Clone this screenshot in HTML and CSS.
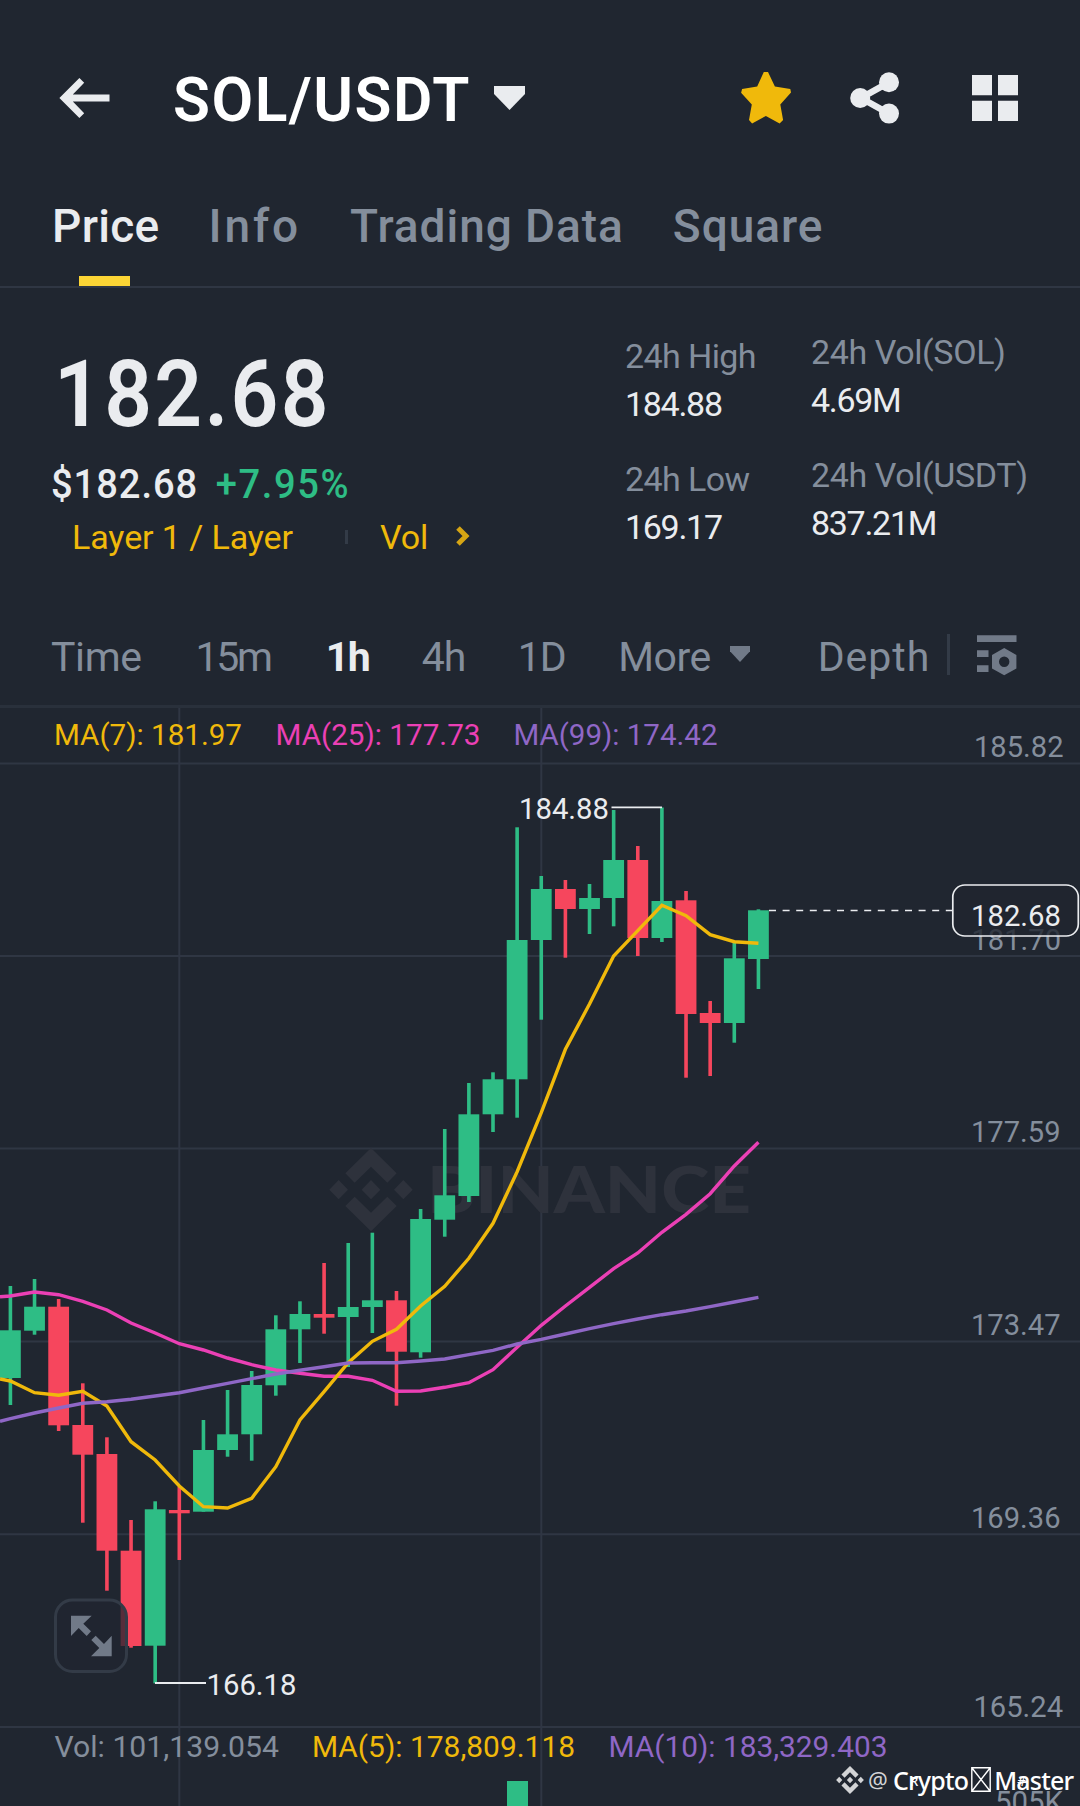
FILE: index.html
```html
<!DOCTYPE html>
<html lang="en">
<head>
    <meta charset="UTF-8">
    <meta name="viewport" content="width=device-width, initial-scale=1.0">
    <title>SOL/USDT</title>
    <link rel="stylesheet" href="styles.css">
</head>
<body>
    <header class="header">
        <svg class="back" width="51" height="40" viewBox="0 0 51 40">
            <path d="M.4 20 20.4 0l4.8 4.8L13.8 16.4h36.7v7.2H13.8l11.4 11.6-4.8 4.8z"/>
        </svg>
        <h1 class="pair">SOL/USDT</h1>
        <svg class="caret" width="31" height="24" viewBox="0 0 31 24">
            <path d="M0 0h31v8L15.5 24 0 8z"/>
        </svg>
        <div class="actions">
            <svg class="star" width="50" height="52" viewBox="0 0 50 52">
                <path d="M22.8 0h4.2l6.9 14.5 15.4 2.6.7 3.4-10.7 12 2.8 15.6-3.5 3.4L24.9 44 11.1 51.4 8 48l2.8-15.6L.1 20.7l1-3.6 15.1-2.6z"/>
            </svg>
            <svg class="share" width="50" height="52" viewBox="0 0 50 52">
                <path d="M39 10.4 11 26l28 15.6" fill="none" stroke="#eaecef" stroke-width="6.5"/>
                <circle cx="39" cy="10.3" r="10"/>
                <circle cx="10.2" cy="26" r="10"/>
                <circle cx="39" cy="41.6" r="10"/>
            </svg>
            <svg class="grid" width="46" height="46" viewBox="0 0 46 46">
                <path d="M0 0h20v20.3H0zM26 0h20v20.3H26zM0 25.7h20V46H0zM26 25.7h20V46H26z"/>
            </svg>
        </div>
    </header>

    <nav class="tabs">
        <span class="tab active">Price</span>
        <span class="tab info">Info</span>
        <span class="tab">Trading Data</span>
        <span class="tab">Square</span>
    </nav>

    <section class="summary">
        <div class="main-price">
            <div class="last">182.68</div>
            <div class="change">
                <span class="usd">$182.68</span>
                <span class="percent">+7.95%</span>
            </div>
            <div class="tags">
                <span>Layer 1 / Layer</span>
                <i class="tag-line"></i>
                <span>Vol</span>
                <svg class="chevron" width="14" height="20" viewBox="0 0 14 20">
                    <path d="M2 2l8 8-8 8"/>
                </svg>
            </div>
        </div>
        <div class="stats">
            <div class="stat"><label>24h High</label><b>184.88</b></div>
            <div class="stat"><label>24h Low</label><b>169.17</b></div>
        </div>
        <div class="stats volume">
            <div class="stat"><label>24h Vol(SOL)</label><b>4.69M</b></div>
            <div class="stat"><label>24h Vol(USDT)</label><b>837.21M</b></div>
        </div>
    </section>

    <div class="periods">
        <span class="time">Time</span>
        <span class="m15">15m</span>
        <span class="active">1h</span>
        <span class="h4">4h</span>
        <span class="d1">1D</span>
        <span class="more">More
            <svg width="20" height="16" viewBox="0 0 20 16"><path d="M0 0h20v5.3L10 16 0 5.3z"/></svg>
        </span>
        <span class="depth">Depth</span>
        <i class="period-line"></i>
        <svg class="settings" width="40" height="41" viewBox="0 0 40 41">
            <path d="M0 .3h39.5V7H0zM0 15.3h11.5V22H0zM0 30.3h11.5V37H0z"/>
            <path fill-rule="evenodd" d="M27.2 13.1l12.2 6.8v13.6l-12.2 6.8L15 33.5V19.9zM27.2 21.5a5.2 5.2 0 1 0 0 10.4 5.2 5.2 0 1 0 0-10.4z"/>
        </svg>
    </div>

    <main class="chart">
        <svg id="chart" width="1080" height="1101" viewBox="0 705 1080 1101"></svg>
        <div class="credit">
            <svg width="28" height="28" viewBox="-126 -126 252 252">
                <path d="M0-125 77-49 49-21 0-69-49-21-77-49zM0 125 77 49 49 21 0 69-49 21-77 49zM-125 0l28-29 28 29-28 29zM-28 0 0-29 28 0 0 29zM69 0l28-29 28 29-28 29z"/>
            </svg>
            <span class="at">@</span>
            <span class="name">Crypto<i class="tiny first">R</i></span>
            <svg class="box" width="20" height="25" viewBox="0 0 20 25">
                <path d="M.8.8h18.4v23.4H.8zM.8.8l18.4 23.4M19.2.8.8 24.2"/>
            </svg>
            <span class="name">Master<i class="tiny second">#</i></span>
        </div>
    </main>

    <script src="chart.js"></script>
</body>
</html>
```
FILE: styles.css
```css
body {
    margin: 0;
    width: 1080px;
    height: 1806px;
    overflow: hidden;
    background: #202630;
    color: #eaecef;
    font-family: "Roboto", sans-serif;
}

svg {
    display: block;
    flex: none;
}

.header {
    display: flex;
    align-items: center;
    height: 96px;
    padding: 50px 62px 0 59px;
    fill: #eaecef;
}

.pair {
    margin: 5px 0 0 63px;
    font-size: 60.5px;
    font-weight: 600;
    line-height: 96px;
    letter-spacing: 1.5px;
    color: #fff;
}

.caret {
    margin-left: 23px;
}

.actions {
    display: flex;
    align-items: center;
    margin-left: auto;
}

.star {
    fill: #f0b90b;
}

.share {
    margin: 0 72px 0 59px;
}

.tabs {
    display: flex;
    gap: 49px;
    padding: 0 52px;
    height: 140px;
    border-bottom: 2px solid #2f3643;
}

.tab {
    position: relative;
    padding-top: 50px;
    font-size: 46px;
    font-weight: 500;
    line-height: 60px;
    letter-spacing: 0.95px;
    white-space: nowrap;
    color: #848e9c;
}

.tab.info {
    letter-spacing: 2.9px;
}

.tab.active {
    color: #eaecef;
    letter-spacing: 0.3px;
}

.tab.active::after {
    content: "";
    position: absolute;
    left: 27px;
    bottom: 0;
    width: 51px;
    height: 10px;
    background: #fcd535;
}

.summary {
    display: flex;
    height: 322px;
}

.main-price {
    width: 574px;
    padding: 57px 0 0 51px;
}

/* digits are set slightly condensed */
.last,
.change {
    transform-origin: left;
}

.last {
    margin-left: 3px;
    font-size: 93px;
    font-weight: 600;
    line-height: 100px;
    letter-spacing: 2.6px;
    transform: scaleX(0.9);
}

.change {
    display: flex;
    gap: 19px;
    margin-top: 14px;
    font-size: 41px;
    font-weight: 500;
    line-height: 50px;
    transform: scaleX(0.93);
}

.usd {
    letter-spacing: 1px;
}

.percent {
    color: #2ebd85;
    letter-spacing: 1.7px;
}

.tags {
    display: flex;
    align-items: center;
    margin: 8px 0 0 21px;
    font-size: 34px;
    line-height: 40px;
    letter-spacing: -0.1px;
    color: #f0b90b;
}

.tag-line {
    width: 3px;
    height: 14px;
    margin: 0 32px 0 52px;
    background: #333b47;
}

.chevron {
    margin: -2px 0 0 28px;
    fill: none;
    stroke: #d6a514;
    stroke-width: 5;
}

.stats {
    width: 186px;
    padding-top: 44px;
}

.stats.volume {
    width: auto;
    padding-top: 40px;
}

.stat {
    margin-bottom: 27px;
    font-size: 34px;
    line-height: 48px;
    white-space: nowrap;
}

.stat label {
    display: block;
    color: #848e9c;
    letter-spacing: -0.6px;
}

.volume label {
    letter-spacing: -0.4px;
}

.stat b {
    display: block;
    font-weight: 400;
    letter-spacing: -1.3px;
}

.periods {
    display: flex;
    align-items: center;
    height: 95px;
    padding-left: 51px;
    font-size: 41px;
    line-height: 97px;
    color: #848e9c;
    fill: #717a88;
}

.periods span {
    margin-right: 52.5px;
    letter-spacing: -1px;
}

.periods .time {
    margin-right: 54px;
    letter-spacing: -0.4px;
}

.periods .m15 {
    margin-right: 55px;
    letter-spacing: -2.3px;
}

.periods .active {
    font-weight: 700;
    letter-spacing: -1.5px;
    color: #eaecef;
}

.periods .more {
    display: flex;
    align-items: center;
    gap: 19px;
    margin-right: 68px;
    letter-spacing: -0.5px;
}

.periods .more svg {
    margin-top: -8px;
}

.periods .depth {
    margin-right: 17px;
    letter-spacing: 1px;
}

.period-line {
    width: 3px;
    height: 41px;
    margin: -6px 27px 0 0;
    background: #333b47;
}

.settings {
    margin-top: -4px;
}

.chart {
    position: relative;
    height: 1101px;
}

.chart text {
    font-size: 30px;
}

.chart .brand {
    font-family: "Lato", sans-serif;
    font-size: 64px;
    font-weight: 900;
}

/* author mark over the volume pane */
.credit {
    position: absolute;
    left: 836px;
    bottom: 9px;
    display: flex;
    align-items: center;
    height: 34px;
    font-family: "Noto Sans", sans-serif;
    font-size: 25px;
    font-weight: 500;
    line-height: 34px;
    color: #fff;
    fill: #d3d4d6;
}

.credit .at {
    width: 20px;
    margin: -2px 5px 0 4px;
    font-size: 22px;
    font-weight: 400;
    color: #d3d4d6;
}

.credit .name {
    position: relative;
    letter-spacing: -0.8px;
}

.credit .box {
    margin: -2px 3px 0;
    fill: none;
    stroke: #fff;
    stroke-width: 1.4;
}

.tiny {
    position: absolute;
    top: 1px;
    font-size: 13px;
    font-style: normal;
}

.tiny.first {
    left: 17px;
}

.tiny.second {
    left: 23px;
}
```
FILE: chart.js
```js
const GREEN = '#2ebd85';
const RED = '#f6465d';
const GRAY = '#848e9c';
const LINE = '#2f3643';
const LIGHT = '#eaecef';
const STEP = 24.13;
const x = i => 10.4 + STEP * i;

// high, body top, body bottom, low, up
const candles = [
    [1286, 1330.3, 1378, 1405, 1],
    [1279, 1306.7, 1330.7, 1334.7, 1],
    [1299, 1306.7, 1425.3, 1431, 0],
    [1383.3, 1425, 1454.7, 1522.7, 0],
    [1437.3, 1454, 1550.7, 1590.7, 0],
    [1520, 1550.7, 1646, 1647.7, 0],
    [1501.3, 1509.3, 1645.7, 1683.3, 1],
    [1486.7, 1510, 1513.3, 1560, 0],
    [1420, 1450, 1511.7, 1511.7, 1],
    [1390, 1434.3, 1450, 1456.7, 1],
    [1371, 1385, 1434.3, 1460.7, 1],
    [1315.3, 1329.3, 1385.3, 1395.7, 1],
    [1301.3, 1314, 1329.3, 1363, 1],
    [1263, 1314, 1317.7, 1333.7, 0],
    [1243, 1307, 1317, 1367, 1],
    [1232.7, 1300.3, 1307, 1333, 1],
    [1291, 1300.3, 1351.7, 1405.7, 0],
    [1209, 1219, 1352.3, 1357.7, 1],
    [1129, 1195.3, 1219.7, 1236.7, 1],
    [1083, 1114.3, 1196, 1202, 1],
    [1072.3, 1079.3, 1114.3, 1132, 1],
    [827.3, 940, 1079.3, 1117.7, 1],
    [876, 889, 940, 1019.7, 1],
    [880, 889, 909, 957.7, 0],
    [884, 898, 909, 934, 1],
    [810, 860, 898, 926.3, 1],
    [846, 860, 938, 956, 0],
    [807.5, 901, 938, 942, 1],
    [891, 900.3, 1014, 1077.7, 0],
    [1001, 1013, 1023, 1076, 0],
    [942, 958.3, 1023, 1042.7, 1],
    [909.3, 910.3, 959, 989, 1]
];

// first value is at the left edge of the pane
const averages = [
    ['#eb40b5', [1296.7, 1296, 1292, 1294.7, 1301.3, 1310, 1323, 1333, 1343.7, 1350, 1358, 1364.7, 1370, 1373.3, 1376.3, 1376.3, 1380.3, 1391.3, 1391, 1387.3, 1382.7, 1369.7, 1347.3, 1325.3, 1306, 1287.3, 1268.7, 1253, 1232.3, 1214.3, 1193.7, 1166, 1142.3]],
    ['#f0b90b', [1379, 1381, 1392.7, 1395.3, 1391.3, 1406, 1441.7, 1460, 1486, 1506.7, 1508, 1498.3, 1466.7, 1420, 1391.7, 1362.7, 1341.3, 1329.3, 1306, 1286.3, 1258.3, 1223.3, 1171.7, 1112.7, 1049.3, 1004, 956, 930.7, 905.3, 915.7, 934.7, 941.7, 943.3]],
    ['#8f67c6', [1421.3, 1418.7, 1413, 1408, 1403.3, 1401.7, 1399.3, 1396, 1392.7, 1388, 1383.3, 1378.7, 1374, 1370.3, 1366.7, 1363, 1362.7, 1362.7, 1361, 1359, 1354.7, 1350.3, 1344, 1339.3, 1334, 1328.7, 1323.7, 1319, 1314.7, 1311, 1306.7, 1302, 1297.3]]
];

// text, x, baseline, width, color
const labels = [
    ['MA(7): 181.97', 54, 745, 188, '#f0b90b'],
    ['MA(25): 177.73', 275.5, 745, 205, '#eb40b5'],
    ['MA(99): 174.42', 513.5, 745, 204, '#8f67c6'],
    ['Vol: 101,139.054', 54.5, 1757, 224.5, GRAY],
    ['MA(5): 178,809.118', 312, 1757, 263, '#f0b90b'],
    ['MA(10): 183,329.403', 608.5, 1757, 279, '#8f67c6'],
    ['184.88', 519, 819, 90, LIGHT],
    ['166.18', 206.5, 1695, 90, LIGHT]
];

const axis = [
    ['185.82', 974, 757],
    ['181.70', 971.5, 950],
    ['177.59', 971, 1141.5],
    ['173.47', 971, 1334.5],
    ['169.36', 971, 1527.5],
    ['165.24', 973.5, 1717]
];

const text = (t, left, base, width, color) =>
    `<text x="${left}" y="${base}" textLength="${width}" lengthAdjust="spacingAndGlyphs" fill="${color}">${t}</text>`;

let svg = '';

// grid
for (const y of [763.5, 956, 1148.5, 1341.5, 1534.3, 1727]) {
    svg += `<path d="M0 ${y}H1080" stroke="${LINE}" stroke-width="2"/>`;
}
for (const gx of [179.3, 541.3]) {
    svg += `<path d="M${gx} 707V1806" stroke="${LINE}" stroke-width="2"/>`;
}
svg += `<path d="M0 706.5H1080" stroke="#29303b" stroke-width="3"/>`;

// brand mark behind the candles
svg += `<g fill="#2e323c">
    <path transform="translate(371 1189.7) scale(.3333)" d="M0-125 77-49 49-21 0-69-49-21-77-49zM0 125 77 49 49 21 0 69-49 21-77 49zM-125 0l28-29 28 29-28 29zM-28 0 0-29 28 0 0 29zM69 0l28-29 28 29-28 29z"/>
    <text class="brand" x="427" y="1213" textLength="324" lengthAdjust="spacingAndGlyphs">BINANCE</text>
</g>`;

for (const [t, left, base] of axis) {
    svg += text(t, left, base, 89.5, GRAY);
}

candles.forEach(([high, top, bottom, low, up], i) => {
    const color = up ? GREEN : RED;
    svg += `<rect x="${x(i) - 1.8}" y="${high}" width="3.6" height="${low - high}" fill="${color}"/>`;
    svg += `<rect x="${x(i) - 10.4}" y="${top}" width="20.8" height="${bottom - top}" fill="${color}"/>`;
});

for (const [color, values] of averages) {
    const points = values.map((v, i) => `${i ? x(i - 1) : 0},${v}`).join(' ');
    svg += `<polyline points="${points}" fill="none" stroke="${color}" stroke-width="3.4"/>`;
}

svg += `<rect x="507" y="1781" width="21" height="25" fill="${GREEN}"/>`;

// high and low markers
svg += `<path d="M611.5 807.3H662M155 1683H206" stroke="${LIGHT}" stroke-width="1.8"/>`;
for (const [t, left, base, width, color] of labels) {
    svg += text(t, left, base, width, color);
}
svg += text('505K', 995, 1812, 68, GRAY);

// last price tag
svg += `<path d="M769 910.5H952" stroke="${LIGHT}" stroke-width="1.5" stroke-dasharray="7 6.6"/>
    <rect x="952.8" y="885" width="125.5" height="51" rx="12" fill="#202630" fill-opacity=".8" stroke="${LIGHT}" stroke-width="1.7"/>`;
svg += text('182.68', 971, 926, 90, LIGHT);

// expand button
svg += `<rect x="55.5" y="1600" width="71" height="71.5" rx="17" fill="#202630" fill-opacity=".75" stroke="#333b47" stroke-width="3"/>
    <path fill="#717a88" d="M71 1615.7h20.7l-8.4 8 7.7 7.6-4.3 4.7-8-8-7.7 8zM111.7 1656.3H91l8.3-8.3-8-8 4.4-4.3 8.3 8.3 7.7-8.3z"/>`;

document.getElementById('chart').innerHTML = svg;
```
